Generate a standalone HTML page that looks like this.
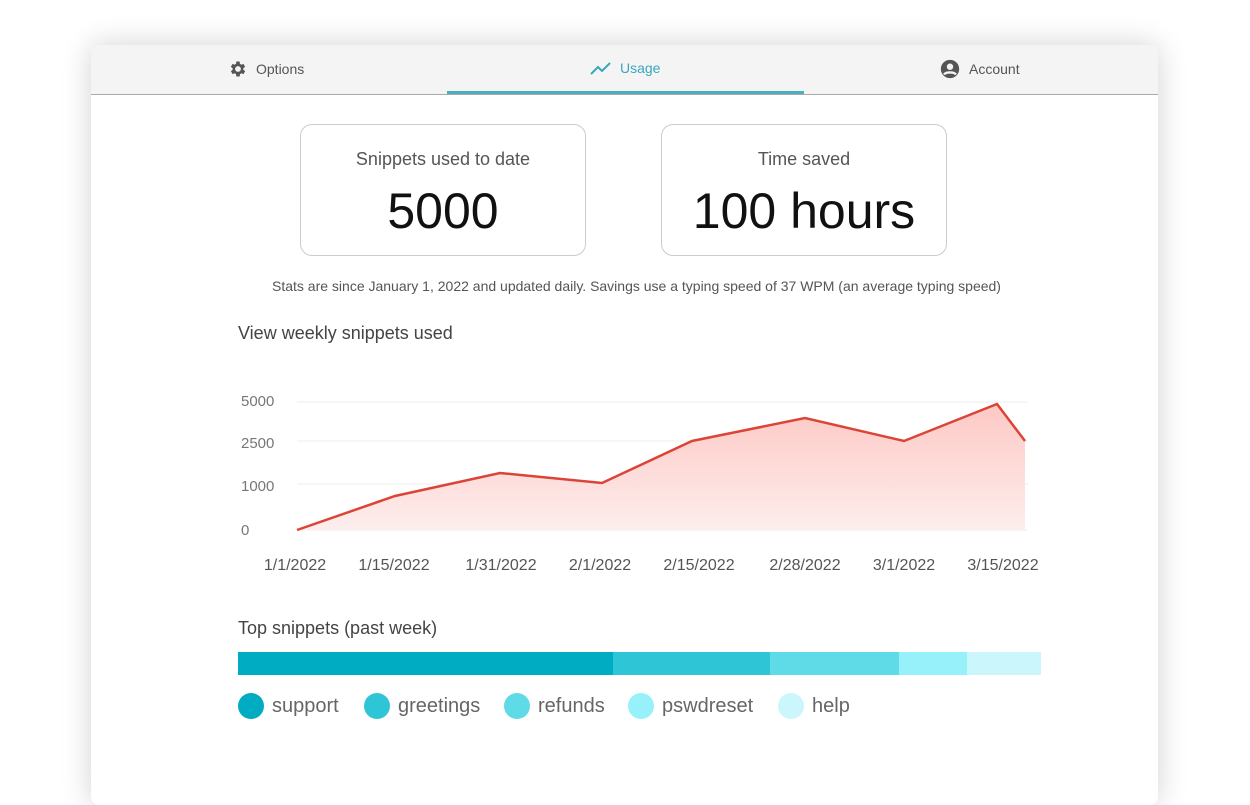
<!DOCTYPE html>
<html><head><style>
body{margin:0;width:1250px;height:768px;background:#fff;font-family:"Liberation Sans",sans-serif;overflow:hidden;position:relative}
.card{position:absolute;left:91px;top:45px;width:1067px;height:760px;background:#fff;border-radius:8px;box-shadow:0 0 30px rgba(0,0,0,.18)}
.hdr{position:absolute;left:0;top:0;width:1067px;height:49px;background:#f4f4f4;border-bottom:1.5px solid #aaa;border-radius:8px 8px 0 0}
.tab{position:absolute;top:14px;font-size:14px;color:#555;display:flex;align-items:center;gap:8px}
.ul{position:absolute;left:356px;top:46px;width:357px;height:3px;background:#4aaec4}
.box{position:absolute;top:124px;width:286px;height:132px;border:1px solid #ccc;border-radius:12px;text-align:center;box-sizing:border-box}
.box .t{margin-top:24px;font-size:18px;color:#555}
.box .v{margin-top:12px;font-size:50px;color:#111}
.abs{position:absolute}
.lg{position:absolute;top:692px;display:flex;align-items:center;gap:8px;font-size:20px;color:#666}
.lg i{display:inline-block;width:26px;height:26px;border-radius:50%}
</style></head><body>
<div class="card">
<div class="hdr"></div>
<div class="tab" style="left:137px"><svg width="20" height="20" viewBox="0 0 24 24"><path fill="#555" d="M19.4 13a7.5 7.5 0 000-2l2.1-1.6-2-3.5-2.5 1a7 7 0 00-1.7-1L15 3h-4l-.4 2.9a7 7 0 00-1.7 1l-2.5-1-2 3.5L6.6 11a7.5 7.5 0 000 2l-2.1 1.6 2 3.5 2.5-1a7 7 0 001.7 1L11 21h4l.4-2.9a7 7 0 001.7-1l2.5 1 2-3.5zM13 15.5a3.5 3.5 0 110-7 3.5 3.5 0 010 7z" transform="translate(-1 0)"/></svg>Options</div>
<div class="tab" style="left:499px;top:15px;color:#3aa6bd"><svg width="22" height="16" viewBox="0 0 22 16"><path d="M1 14l7-7 4 4 8-8" fill="none" stroke="#3aa6bd" stroke-width="2"/></svg>Usage</div>
<div class="tab" style="left:848px;top:13px"><svg width="22" height="22" viewBox="0 0 24 24"><circle cx="12" cy="12" r="10" fill="#555"/><circle cx="12" cy="9.5" r="3.5" fill="#f4f4f4"/><path d="M5.5 18c2-3 11-3 13 0" fill="none" stroke="#f4f4f4" stroke-width="2.5"/></svg>Account</div>
<div class="ul"></div>
</div>
<div class="box" style="left:300px"><div class="t">Snippets used to date</div><div class="v">5000</div></div>
<div class="box" style="left:661px"><div class="t">Time saved</div><div class="v">100 hours</div></div>
<div class="abs" style="left:0;width:1273px;top:278px;text-align:center;font-size:14px;color:#555">Stats are since January 1, 2022 and updated daily. Savings use a typing speed of 37 WPM (an average typing speed)</div>
<div class="abs" style="left:238px;top:323px;font-size:18px;color:#444">View weekly snippets used</div>
<svg class="abs" style="left:0;top:0" width="1250" height="600">
<defs><linearGradient id="g" x1="0" y1="0" x2="0" y2="1"><stop offset="0" stop-color="#fdc8c4"/><stop offset="1" stop-color="#fdeeed"/></linearGradient></defs>
<g stroke="#eee" stroke-width="1"><line x1="297" y1="402" x2="1028" y2="402"/><line x1="297" y1="441" x2="1028" y2="441"/><line x1="297" y1="484" x2="1028" y2="484"/><line x1="297" y1="530" x2="1028" y2="530"/></g>
<path d="M297 530L395 496L500 473L602 483L692 441L805 418L904 441L997 404L1025 441L1025 530Z" fill="url(#g)"/>
<path d="M297 530L395 496L500 473L602 483L692 441L805 418L904 441L997 404L1025 441" fill="none" stroke="#db4437" stroke-width="2.5"/>
<g font-size="15" fill="#777" font-family="Liberation Sans"><text x="241" y="406">5000</text><text x="241" y="448">2500</text><text x="241" y="491">1000</text><text x="241" y="535">0</text></g>
<g font-size="16" fill="#555" font-family="Liberation Sans" text-anchor="middle"><text x="295" y="570">1/1/2022</text><text x="394" y="570">1/15/2022</text><text x="501" y="570">1/31/2022</text><text x="600" y="570">2/1/2022</text><text x="699" y="570">2/15/2022</text><text x="805" y="570">2/28/2022</text><text x="904" y="570">3/1/2022</text><text x="1003" y="570">3/15/2022</text></g>
</svg>
<div class="abs" style="left:238px;top:618px;font-size:18px;color:#444">Top snippets (past week)</div>
<div class="abs" style="left:238px;top:652px;width:375px;height:23px;background:#00acc1"></div>
<div class="abs" style="left:613px;top:652px;width:157px;height:23px;background:#2ec5d6"></div>
<div class="abs" style="left:770px;top:652px;width:129px;height:23px;background:#5fdbe8"></div>
<div class="abs" style="left:899px;top:652px;width:68px;height:23px;background:#96f1fb"></div>
<div class="abs" style="left:967px;top:652px;width:74px;height:23px;background:#cbf7fc"></div>
<div class="lg" style="left:238px;top:693px"><i style="background:#00acc1"></i>support</div>
<div class="lg" style="left:364px;top:693px"><i style="background:#2ec5d6"></i>greetings</div>
<div class="lg" style="left:504px;top:693px"><i style="background:#5fdbe8"></i>refunds</div>
<div class="lg" style="left:628px;top:693px"><i style="background:#96f1fb"></i>pswdreset</div>
<div class="lg" style="left:778px;top:693px"><i style="background:#cbf7fc"></i>help</div>
</body></html>
